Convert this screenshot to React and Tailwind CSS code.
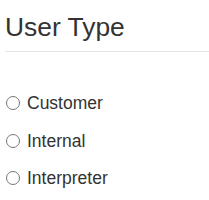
export default function App() {
  const items = ["Customer", "Internal", "Interpreter"];
  return (
    <div className="w-[209px] h-[200px] bg-white px-[5px] text-[#333]" style={{ fontFamily: '"Liberation Sans", Arial, sans-serif' }}>
      <h3 className="pt-[13px] pb-[9px] border-b border-[#e5e5e5] text-[26.4px] leading-[29px] font-normal m-0 -mr-[5px]">User Type</h3>
      <div className="mt-[41px] flex flex-col gap-[17.5px]">
        {items.map((t) => (
          <label key={t} className="flex items-center h-[20px] text-[17.5px] leading-[20px]">
            <input type="radio" name="usertype" className="m-0 ml-[1px] w-[14px] h-[14px]" />
            <span className="ml-[7px]">{t}</span>
          </label>
        ))}
      </div>
    </div>
  );
}
